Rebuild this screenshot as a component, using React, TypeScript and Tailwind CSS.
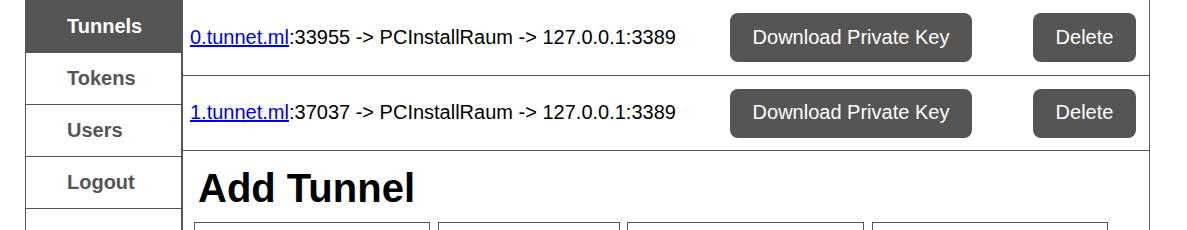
import React from "react";

const navItems = [
  { label: "Tunnels", active: true },
  { label: "Tokens", active: false },
  { label: "Users", active: false },
  { label: "Logout", active: false },
  { label: "", active: false },
];

const tunnels = [
  { host: "0.tunnet.ml", port: 33955, client: "PCInstallRaum", target: "127.0.0.1:3389" },
  { host: "1.tunnet.ml", port: 37037, client: "PCInstallRaum", target: "127.0.0.1:3389" },
];

const Sidebar: React.FC = () => (
  <nav className="ml-[25px] w-[158px] shrink-0 border-l border-r-2 border-t border-[#555]">
    {navItems.map((item, i) => (
      <a
        key={i}
        className={
          "flex h-[52px] items-center border-b border-[#555] pb-[2px] pl-[41px] text-[20px] font-bold " +
          (item.active ? "bg-[#555] text-white" : "text-[#555]")
        }
      >
        {item.label}
      </a>
    ))}
  </nav>
);

const TunnelRow: React.FC<{ tunnel: (typeof tunnels)[number]; first: boolean }> = ({ tunnel, first }) => (
  <div
    className={
      "flex items-center border-b border-[#555] pl-[7px] pr-[13px] " +
      (first ? "h-[76px]" : "h-[75px]")
    }
  >
    <span className="mb-[2px] flex-1 text-[20px] text-black">
      <a className="text-[#0000ee] underline">{tunnel.host}</a>:{tunnel.port} -&gt; {tunnel.client} -&gt;{" "}
      {tunnel.target}
    </span>
    <button className="h-[49px] w-[242px] rounded-[8px] bg-[#555] pb-[2px] text-[20px] text-white">
      Download Private Key
    </button>
    <button className="ml-[61px] h-[49px] w-[103px] rounded-[8px] bg-[#555] pb-[2px] text-[20px] text-white">
      Delete
    </button>
  </div>
);

export default function App() {
  return (
    <div className="flex h-[230px] w-[1187px] overflow-hidden bg-white font-['Liberation_Sans',Arial,sans-serif]">
      <Sidebar />
      <main className="w-[967px] shrink-0 border-r border-[#555]">
        {tunnels.map((t, i) => (
          <TunnelRow key={t.host} tunnel={t} first={i === 0} />
        ))}
        <section className="pt-[14px]">
          <h1 className="pl-[15px] text-[40px] font-bold leading-[46px] text-black">Add Tunnel</h1>
          <div className="mt-[11px] flex pl-[11px]">
            <div className="h-[30px] w-[236px] border border-[#555]" />
            <div className="ml-[8px] h-[30px] w-[182px] border border-[#555]" />
            <div className="ml-[7px] h-[30px] w-[237px] border border-[#555]" />
            <div className="ml-[8px] h-[30px] w-[236px] border border-[#555]" />
          </div>
        </section>
      </main>
    </div>
  );
}
